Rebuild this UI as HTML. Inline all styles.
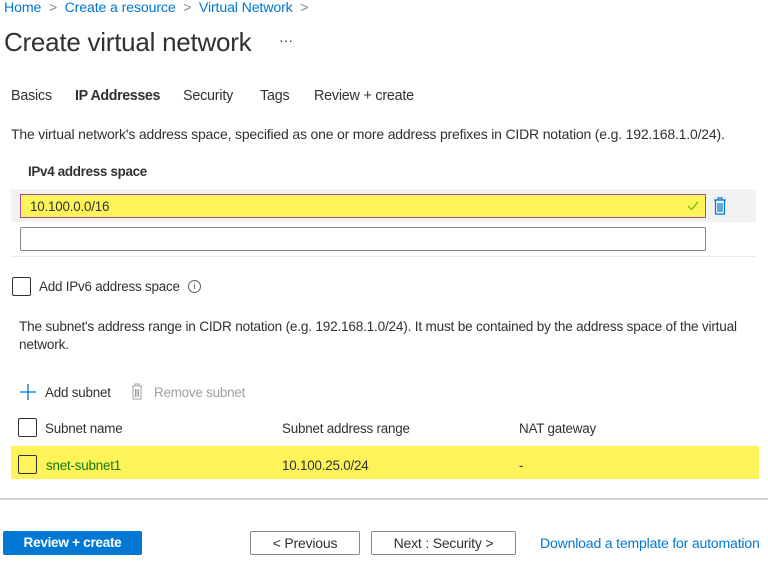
<!DOCTYPE html>
<html><head><style>
body{margin:0;width:768px;height:563px;background:#fff;font-family:"Liberation Sans",sans-serif;color:#323130;position:relative;overflow:hidden}
.a{position:absolute;white-space:nowrap}
.bl{color:#0078d4}
.t{font-size:13.4px;letter-spacing:-0.2px}
</style></head><body>
<div class="a bl" style="left:4px;top:0;font-size:14.2px;letter-spacing:-0.15px">Home <span style="color:#8a8886">&nbsp;&gt;&nbsp;</span> Create a resource <span style="color:#8a8886">&nbsp;&gt;&nbsp;</span> Virtual Network <span style="color:#8a8886">&nbsp;&gt;</span></div>
<div class="a" style="left:4px;top:27px;font-size:26px;letter-spacing:-0.25px">Create virtual network</div>
<div class="a" style="left:279px;top:32px;font-size:14px">···</div>
<div class="a" style="left:11px;top:88px;font-size:14.3px;letter-spacing:-0.2px">Basics</div>
<div class="a" style="left:75px;top:88px;font-size:14.3px;font-weight:bold;letter-spacing:-0.4px">IP Addresses</div>
<div class="a" style="left:183px;top:88px;font-size:14.3px;letter-spacing:-0.2px">Security</div>
<div class="a" style="left:260px;top:88px;font-size:14.3px;letter-spacing:-0.2px">Tags</div>
<div class="a" style="left:314px;top:88px;font-size:14.3px;letter-spacing:-0.2px">Review + create</div>
<div class="a" style="left:11px;top:126px;font-size:14px;letter-spacing:-0.18px">The virtual network's address space, specified as one or more address prefixes in CIDR notation (e.g. 192.168.1.0/24).</div>
<div class="a" style="left:28px;top:164px;font-size:13.4px;font-weight:bold;letter-spacing:-0.3px">IPv4 address space</div>
<div class="a" style="left:11px;top:189px;width:745px;height:33px;background:#f2f2f2"></div>
<div class="a" style="left:20px;top:194px;width:684px;height:22px;background:#fef45a;border:1px solid #a7499a"></div>
<div class="a t" style="left:30px;top:199px">10.100.0.0/16</div>
<svg class="a" style="left:686px;top:200px" width="14" height="12"><path d="M2 6l3.5 3.5L12 2" stroke="#6bb700" fill="none" stroke-width="1.2"/></svg>
<svg class="a" style="left:713px;top:197px" width="14" height="18"><path d="M1 3h12M5 3V1h4v2M2.5 3v14h9V3M5 6v9M7 6v9M9 6v9" stroke="#0078d4" fill="none" stroke-width="1.2"/></svg>
<div class="a" style="left:20px;top:227px;width:684px;height:22px;border:1px solid #8a8886;border-radius:2px"></div>
<div class="a" style="left:11px;top:256px;width:745px;height:1px;background:#edebe9"></div>
<div class="a" style="left:12px;top:277px;width:17px;height:17px;border:1px solid #323130;border-radius:2px"></div>
<div class="a t" style="left:39px;top:279px">Add IPv6 address space</div>
<div class="a" style="left:188px;top:280px;width:11px;height:11px;border:1px solid #605e5c;border-radius:50%;font-size:9px;text-align:center;line-height:11px;color:#605e5c">i</div>
<div class="a" style="left:19px;top:318px;font-size:13.6px;letter-spacing:-0.2px;line-height:18px">The subnet's address range in CIDR notation (e.g. 192.168.1.0/24). It must be contained by the address space of the virtual<br>network.</div>
<svg class="a" style="left:20px;top:384px" width="16" height="16"><path d="M8 0v16M0 8h16" stroke="#0078d4" stroke-width="1.3"/></svg>
<div class="a t" style="left:45px;top:385px">Add subnet</div>
<svg class="a" style="left:131px;top:383px" width="12" height="17"><path d="M1 3h10M4 3V1h4v2M2 3v13h8V3M4.5 6v8M6 6v8M7.5 6v8" stroke="#a19f9d" fill="none"/></svg>
<div class="a t" style="left:154px;top:385px;color:#a19f9d">Remove subnet</div>
<div class="a" style="left:18px;top:418px;width:17px;height:17px;border:1px solid #323130;border-radius:2px"></div>
<div class="a t" style="left:45px;top:421px">Subnet name</div>
<div class="a t" style="left:282px;top:421px">Subnet address range</div>
<div class="a t" style="left:519px;top:421px">NAT gateway</div>
<div class="a" style="left:11px;top:446px;width:748px;height:33px;background:#fef45a"></div>
<div class="a" style="left:18px;top:455px;width:17px;height:17px;border:1px solid #323130;border-radius:2px"></div>
<div class="a t" style="left:46px;top:458px;color:#107c10">snet-subnet1</div>
<div class="a t" style="left:282px;top:458px">10.100.25.0/24</div>
<div class="a t" style="left:519px;top:458px">-</div>
<div class="a" style="left:0;top:498px;width:768px;height:2px;background:#d2d0ce"></div>
<div class="a" style="left:3px;top:531px;width:139px;height:24px;background:#0078d4;border-radius:2px;color:#fff;font-size:13.6px;font-weight:bold;text-align:center;line-height:24px;letter-spacing:-0.3px">Review + create</div>
<div class="a" style="left:250px;top:531px;width:108px;height:22px;border:1px solid #8a8886;border-radius:2px;font-size:14px;text-align:center;line-height:23px;letter-spacing:-0.2px">&lt; Previous</div>
<div class="a" style="left:371px;top:531px;width:143px;height:22px;border:1px solid #8a8886;border-radius:2px;font-size:14px;text-align:center;line-height:23px;letter-spacing:-0.2px">Next : Security &gt;</div>
<div class="a bl" style="left:540px;top:535px;font-size:14.1px;letter-spacing:-0.2px">Download a template for automation</div>
</body></html>
